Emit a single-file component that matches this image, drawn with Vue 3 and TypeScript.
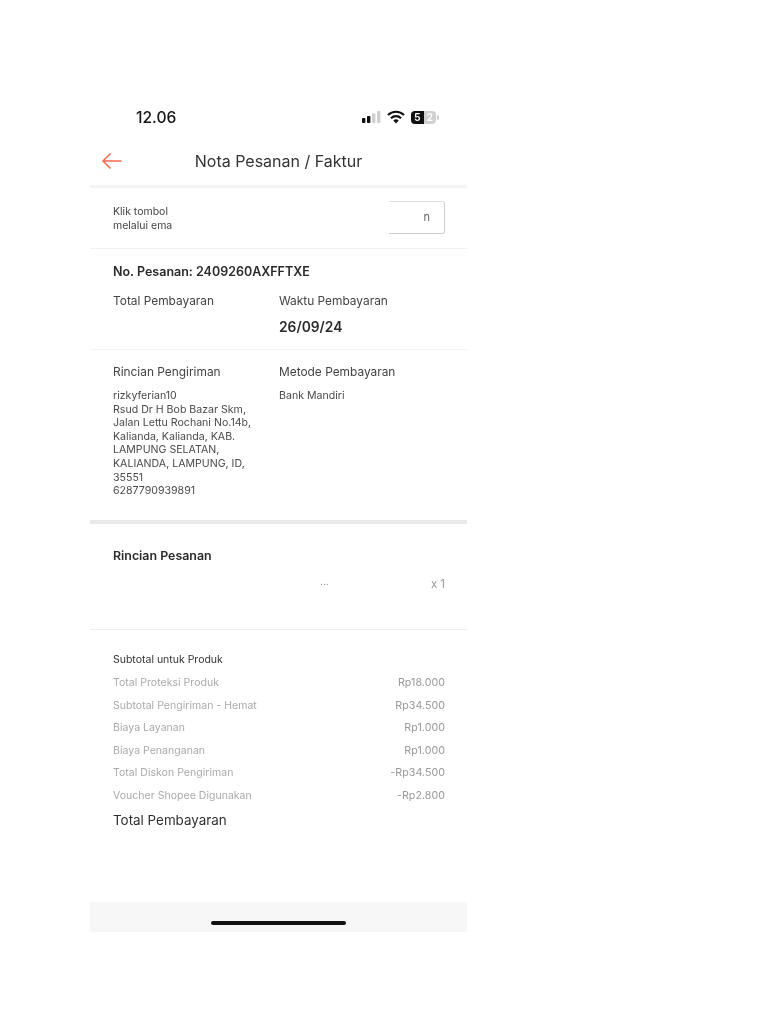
<script setup lang="ts">
const address: string[] = [
  'rizkyferian10',
  'Rsud Dr H Bob Bazar Skm,',
  'Jalan Lettu Rochani No.14b,',
  'Kalianda, Kalianda, KAB.',
  'LAMPUNG SELATAN,',
  'KALIANDA, LAMPUNG, ID,',
  '35551',
  '6287790939891',
]
const rows: { label: string; value: string }[] = [
  { label: 'Total Proteksi Produk', value: 'Rp18.000' },
  { label: 'Subtotal Pengiriman - Hemat', value: 'Rp34.500' },
  { label: 'Biaya Layanan', value: 'Rp1.000' },
  { label: 'Biaya Penanganan', value: 'Rp1.000' },
  { label: 'Total Diskon Pengiriman', value: '-Rp34.500' },
  { label: 'Voucher Shopee Digunakan', value: '-Rp2.800' },
]
</script>

<template>
  <div class="page">
    <div class="phone">
      <header class="status">
        <span class="time">12.06</span>
        <div class="status-icons">
          <svg width="20" height="12" viewBox="0 0 20 12">
            <rect x="0" y="7" width="3.4" height="5" rx="0.8" fill="#111" />
            <rect x="5" y="5" width="3.4" height="7" rx="0.8" fill="#111" />
            <rect x="10" y="2.5" width="3.4" height="9.5" rx="0.8" fill="#cfcfcf" />
            <rect x="15" y="0" width="3.4" height="12" rx="0.8" fill="#cfcfcf" />
          </svg>
          <svg width="18" height="14" viewBox="0 0 18 14">
            <path d="M1 5a11.5 11.5 0 0 1 16 0" fill="none" stroke="#111" stroke-width="2.2" />
            <path d="M4 8.2a7.2 7.2 0 0 1 10 0" fill="none" stroke="#111" stroke-width="2.2" />
            <path d="M6.3 10.6 9 13.4l2.7-2.8a3.8 3.8 0 0 0-5.4 0z" fill="#111" />
          </svg>
          <div class="battery">
            <div class="battery-body"><span class="digit-dark">5</span><span class="digit-light">2</span></div>
            <i class="battery-cap"></i>
          </div>
        </div>
      </header>

      <nav class="nav">
        <svg class="back" width="22" height="18" viewBox="0 0 22 18">
          <path d="M20.5 9H2M9.5 1.5 2 9l7.5 7.5" fill="none" stroke="#ee6a50" stroke-width="1.5" />
        </svg>
        <h1 class="title">Nota Pesanan / Faktur</h1>
      </nav>

      <section class="notice">
        <p class="notice-text">Klik tombol<br />melalui ema</p>
        <div class="notice-btn">n</div>
      </section>

      <section class="order">
        <h2 class="order-no">No. Pesanan: 2409260AXFFTXE</h2>
        <div class="cols">
          <div class="col-label">Total Pembayaran</div>
          <div>
            <div class="col-label">Waktu Pembayaran</div>
            <div class="date">26/09/24</div>
          </div>
        </div>
      </section>

      <section class="shipping cols">
        <div>
          <div class="col-label">Rincian Pengiriman</div>
          <div class="address">
            <div v-for="line in address" :key="line">{{ line }}</div>
          </div>
        </div>
        <div>
          <div class="col-label">Metode Pembayaran</div>
          <div class="address">Bank Mandiri</div>
        </div>
      </section>

      <section class="details">
        <h2 class="details-title">Rincian Pesanan</h2>
        <div class="item">
          <span class="dots">...</span>
          <span class="qty">x 1</span>
        </div>
      </section>

      <section class="summary">
        <div class="subtotal">Subtotal untuk Produk</div>
        <div v-for="row in rows" :key="row.label" class="row">
          <span>{{ row.label }}</span>
          <span class="value">{{ row.value }}</span>
        </div>
        <div class="total">Total Pembayaran</div>
      </section>

      <footer class="home-bar"><i class="home-indicator"></i></footer>
    </div>
  </div>
</template>

<style scoped>
.page {
  width: 768px;
  height: 1024px;
  background: #fff;
  padding: 92px 0 0 90px;
  box-sizing: border-box;
  font-family: Inter, "Liberation Sans", sans-serif;
  color: #333;
}
.phone {
  width: 377px;
  height: 840px;
  display: flex;
  flex-direction: column;
  background: #fff;
  filter: blur(0.4px);
}
.status {
  height: 50px;
  display: flex;
  align-items: center;
  justify-content: space-between;
  padding: 0 28px 0 46px;
}
.time {
  font-size: 15.6px;
  font-weight: 500;
  color: #161616;
}
.status-icons {
  display: flex;
  align-items: center;
  gap: 5px;
}
.battery {
  display: flex;
  align-items: center;
  gap: 1px;
  margin-left: 1px;
}
.battery-body {
  width: 25px;
  height: 13px;
  border-radius: 4px;
  display: flex;
  overflow: hidden;
  font-size: 10.5px;
  font-weight: 600;
  line-height: 13px;
  text-align: center;
  background: linear-gradient(to right, #111 52%, #d0d0d0 52%);
}
.digit-dark,
.digit-light {
  flex: 1;
  color: #fff;
}
.battery-cap {
  width: 2px;
  height: 5px;
  background: #ccc;
  border-radius: 0 2px 2px 0;
}
.nav {
  height: 46px;
  box-sizing: border-box;
  position: relative;
  display: flex;
  align-items: center;
  justify-content: center;
  padding-bottom: 6px;
  border-bottom: 3px solid #f4f4f4;
}
.back {
  position: absolute;
  left: 11px;
  top: 10px;
}
.title {
  margin: 0;
  font-size: 16px;
  line-height: 20px;
  font-weight: 400;
  color: #333;
}
.notice {
  height: 61px;
  display: flex;
  justify-content: space-between;
  align-items: center;
  padding: 0 22px 0 23px;
  border-bottom: 1px solid #f1f1f1;
  box-sizing: border-box;
}
.notice-text {
  margin: 2px 0 0;
  font-size: 10.5px;
  line-height: 14px;
  color: #444;
}
.notice-btn {
  width: 56px;
  height: 33px;
  margin-bottom: 2px;
  box-sizing: border-box;
  border: 1px solid #ccc;
  border-left: none;
  border-radius: 0 3px 3px 0;
  border-top-color: #ddd;
  display: flex;
  align-items: center;
  justify-content: flex-end;
  padding-right: 14px;
  font-size: 11px;
  color: #666;
}
.order {
  height: 101px;
  box-sizing: border-box;
  padding: 15px 22px 0 23px;
  border-bottom: 1px solid #f3f3f3;
}
.order-no {
  margin: 0 0 14px;
  font-size: 12.5px;
  line-height: 15px;
  font-weight: 600;
  color: #2a2a2a;
}
.cols {
  display: grid;
  grid-template-columns: 166px 1fr;
}
.col-label {
  font-size: 11.9px;
  line-height: 15px;
  color: #444;
}
.date {
  margin-top: 11px;
  font-size: 13.8px;
  line-height: 17px;
  font-weight: 600;
  color: #2a2a2a;
}
.shipping {
  height: 174px;
  box-sizing: border-box;
  padding: 14px 22px 0 23px;
  border-bottom: 4px solid #e9e9e9;
}
.address {
  margin-top: 10px;
  font-size: 10.6px;
  line-height: 13.6px;
  color: #4a4a4a;
}
.details {
  height: 106px;
  box-sizing: border-box;
  padding: 24px 22px 0 23px;
  border-bottom: 1px solid #eee;
}
.details-title {
  margin: 0;
  font-size: 12.4px;
  line-height: 16px;
  font-weight: 600;
  color: #2a2a2a;
}
.item {
  position: relative;
  margin-top: 12px;
  height: 16px;
  display: flex;
  justify-content: flex-end;
  align-items: center;
}
.dots {
  position: absolute;
  left: 207px;
  top: -1px;
  font-size: 10px;
  color: #888;
}
.qty {
  font-size: 11.4px;
  color: #999;
}
.summary {
  padding: 22px 22px 0 23px;
}
.subtotal {
  font-size: 10.5px;
  line-height: 15px;
  color: #333;
  margin-bottom: 0.5px;
}
.row {
  height: 22.6px;
  display: flex;
  align-items: flex-end;
  justify-content: space-between;
  font-size: 10.5px;
  letter-spacing: 0.03px;
  line-height: 15px;
  color: #aaa;
}
.value {
  font-size: 10.7px;
  color: #999;
}
.total {
  margin-top: 7.5px;
  font-size: 13.4px;
  line-height: 18px;
  color: #2f2f2f;
}
.home-bar {
  margin-top: auto;
  height: 30px;
  background: #f7f7f7;
  display: flex;
  align-items: flex-end;
  justify-content: center;
  padding-bottom: 7px;
  box-sizing: border-box;
}
.home-indicator {
  width: 135px;
  height: 4px;
  border-radius: 2px;
  background: #111;
}
</style>

<style>
html,
body {
  margin: 0;
  background: #fff;
}
</style>
